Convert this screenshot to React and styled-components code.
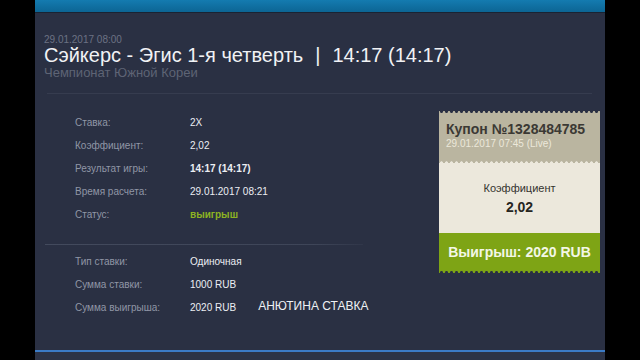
import React from "react";
import styled, { createGlobalStyle } from "styled-components";

const PANEL = "#2a3043";
const CREAM = "#ece8dc";

const GlobalStyle = createGlobalStyle`
  html, body { margin: 0; padding: 0; background: #000; }
  body { font-family: "Liberation Sans", Arial, sans-serif; }
  * { box-sizing: border-box; }
`;

const Frame = styled.div`
  width: 640px;
  height: 360px;
  display: flex;
  justify-content: center;
  background: #000;
  overflow: hidden;
`;

const Panel = styled.div`
  width: 570px;
  height: 360px;
  display: flex;
  flex-direction: column;
  background: ${PANEL};
`;

const TopBar = styled.div`
  height: 13px;
  flex: none;
  background: linear-gradient(#147bb0, #0c6594);
  border-bottom: 1px solid #1a2332;
`;

const Header = styled.div`
  padding: 21px 0 0 9px;
  display: flex;
  flex-direction: column;
`;

const DateLine = styled.div`
  font-size: 10px;
  line-height: 11px;
  color: #6c7284;
`;

const Title = styled.div`
  font-size: 20px;
  line-height: 21px;
  color: #f1f2f5;
  white-space: nowrap;
`;

const Sep = styled.span`
  margin: 0 12px;
`;

const Subtitle = styled.div`
  font-size: 13px;
  line-height: 13px;
  color: #5e6475;
`;

const Divider = styled.div`
  height: 1px;
  margin: 14px 13px 0 12px;
  background: #363c4f;
`;

const Content = styled.div`
  display: flex;
  padding: 17px 5px 0 10px;
`;

const Details = styled.div`
  width: 318px;
  flex: none;
  display: flex;
  flex-direction: column;
`;

const Group = styled.div`
  display: flex;
  flex-direction: column;
  padding-left: 30px;
`;

const Row = styled.div`
  height: 23px;
  display: flex;
  align-items: center;
  font-size: 10px;
  white-space: nowrap;
`;

const Label = styled.span`
  flex: none;
  width: 115px;
  color: #9096a6;
`;

const Value = styled.span`
  flex: none;
  color: ${(p) => p.$color || "#eceef3"};
  font-weight: ${(p) => (p.$bold ? 700 : 400)};
`;

const Note = styled.span`
  flex: none;
  margin-left: 22px;
  margin-bottom: 3px;
  font-size: 12px;
  color: #eef0f4;
`;

const GroupSep = styled.div`
  height: 1px;
  margin: 18px 0 5px;
  background: linear-gradient(90deg, #434a5d, #3e4558 85%, rgba(62, 69, 88, 0.3));
`;

const Coupon = styled.div`
  position: relative;
  margin-left: auto;
  width: 161px;
  height: 162px;
  display: flex;
  flex-direction: column;
  &::before,
  &::after {
    content: "";
    position: absolute;
    left: 0;
    right: 0;
    height: 3px;
    z-index: 2;
    background-size: 5px 3px;
    background-repeat: repeat-x;
  }
  &::before {
    top: 0;
    background-image: radial-gradient(circle at 50% 0, ${PANEL} 1.6px, transparent 2.1px);
  }
  &::after {
    bottom: 0;
    background-image: radial-gradient(circle at 50% 100%, ${PANEL} 1.6px, transparent 2.1px);
  }
`;

const CouponHead = styled.div`
  height: 52px;
  flex: none;
  padding: 10px 7px 0;
  background: #bab5a0;
`;

const CouponNo = styled.div`
  font-size: 14px;
  line-height: 16px;
  font-weight: 700;
  color: #3b3934;
  white-space: nowrap;
`;

const CouponDate = styled.div`
  margin-top: 1px;
  font-size: 10px;
  line-height: 12px;
  color: #ece8da;
`;

const CouponBody = styled.div`
  position: relative;
  height: 70px;
  flex: none;
  padding-top: 19px;
  display: flex;
  flex-direction: column;
  align-items: center;
  background: ${CREAM};
  &::before {
    content: "";
    position: absolute;
    top: -2px;
    left: 0;
    right: 0;
    height: 2px;
    background-image: radial-gradient(circle at 50% 100%, ${CREAM} 1.4px, transparent 1.9px);
    background-size: 5px 2px;
    background-repeat: repeat-x;
  }
`;

const OddsLabel = styled.div`
  font-size: 11px;
  line-height: 13px;
  color: #34332f;
`;

const OddsValue = styled.div`
  margin-top: 4px;
  font-size: 14px;
  line-height: 16px;
  font-weight: 700;
  color: #26251f;
`;

const CouponWin = styled.div`
  flex: 1;
  display: flex;
  align-items: center;
  justify-content: center;
  padding-bottom: 2px;
  background: #7ea415;
  font-size: 14px;
  font-weight: 700;
  color: #f3f7e6;
  white-space: nowrap;
`;

const Spacer = styled.div`
  flex: 1;
`;

const BottomBar = styled.div`
  height: 10px;
  flex: none;
  border-top: 2px solid #3b7bc6;
  background: #2c3346;
`;

const mainRows = [
  { label: "Ставка:", value: "2X" },
  { label: "Коэффициент:", value: "2,02" },
  { label: "Результат игры:", value: "14:17 (14:17)", bold: true },
  { label: "Время расчета:", value: "29.01.2017 08:21" },
  { label: "Статус:", value: "выигрыш", bold: true, color: "#8db322" },
];

const stakeRows = [
  { label: "Тип ставки:", value: "Одиночная" },
  { label: "Сумма ставки:", value: "1000 RUB" },
  { label: "Сумма выигрыша:", value: "2020 RUB", note: "АНЮТИНА СТАВКА" },
];

export default function App() {
  return (
    <>
      <GlobalStyle />
      <Frame>
        <Panel>
          <TopBar />
          <Header>
            <DateLine>29.01.2017 08:00</DateLine>
            <Title>
              Сэйкерс - Эгис 1-я четверть<Sep>|</Sep>14:17 (14:17)
            </Title>
            <Subtitle>Чемпионат Южной Кореи</Subtitle>
          </Header>
          <Divider />
          <Content>
            <Details>
              <Group>
                {mainRows.map((r) => (
                  <Row key={r.label}>
                    <Label>{r.label}</Label>
                    <Value $bold={r.bold} $color={r.color}>
                      {r.value}
                    </Value>
                  </Row>
                ))}
              </Group>
              <GroupSep />
              <Group>
                {stakeRows.map((r) => (
                  <Row key={r.label}>
                    <Label>{r.label}</Label>
                    <Value>{r.value}</Value>
                    {r.note && <Note>{r.note}</Note>}
                  </Row>
                ))}
              </Group>
            </Details>
            <Coupon>
              <CouponHead>
                <CouponNo>Купон №1328484785</CouponNo>
                <CouponDate>29.01.2017 07:45 (Live)</CouponDate>
              </CouponHead>
              <CouponBody>
                <OddsLabel>Коэффициент</OddsLabel>
                <OddsValue>2,02</OddsValue>
              </CouponBody>
              <CouponWin>Выигрыш: 2020 RUB</CouponWin>
            </Coupon>
          </Content>
          <Spacer />
          <BottomBar />
        </Panel>
      </Frame>
    </>
  );
}
